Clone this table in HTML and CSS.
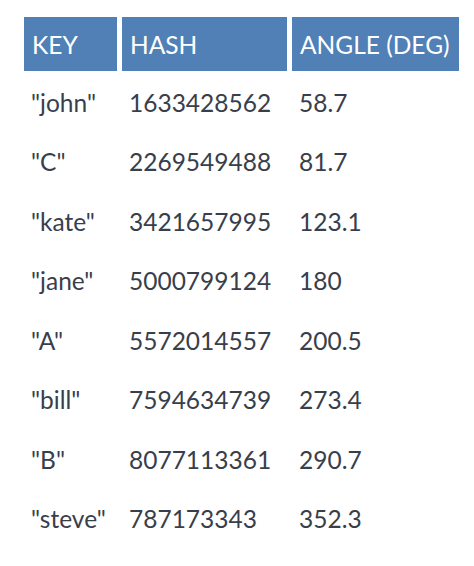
FILE: index.html
```html
<!DOCTYPE html>
<html>
<head>
<meta charset="utf-8">
<link rel="stylesheet" href="styles.css">
</head>
<body>
<div class="table">
  <div class="th">KEY</div><div class="th">HASH</div><div class="th">ANGLE (DEG)</div>
  <div class="td">"john"</div><div class="td">1633428562</div><div class="td">58.7</div>
  <div class="td">"C"</div><div class="td">2269549488</div><div class="td">81.7</div>
  <div class="td">"kate"</div><div class="td">3421657995</div><div class="td">123.1</div>
  <div class="td">"jane"</div><div class="td">5000799124</div><div class="td">180</div>
  <div class="td">"A"</div><div class="td">5572014557</div><div class="td">200.5</div>
  <div class="td">"bill"</div><div class="td">7594634739</div><div class="td">273.4</div>
  <div class="td">"B"</div><div class="td">8077113361</div><div class="td">290.7</div>
  <div class="td">"steve"</div><div class="td">787173343</div><div class="td">352.3</div>
</div>
</body>
</html>
```
FILE: styles.css
```css
html, body {
  margin: 0;
  padding: 0;
  background: #ffffff;
}
body {
  font-family: Lato, "Liberation Sans", sans-serif;
  color: #393e4b;
}
.table {
  display: grid;
  grid-template-columns: 93px 165px 167px;
  grid-template-rows: 54px repeat(8, 59.5px);
  column-gap: 5px;
  padding: 17px 0 0 24px;
}
.th {
  background: #5080b6;
  color: #ffffff;
  font-size: 24.5px;
  display: flex;
  align-items: center;
  padding-left: 8px;
  padding-top: 1px;
}
.td {
  font-size: 24.5px;
  display: flex;
  align-items: center;
  padding-left: 7px;
  padding-top: 3px;
}
```
